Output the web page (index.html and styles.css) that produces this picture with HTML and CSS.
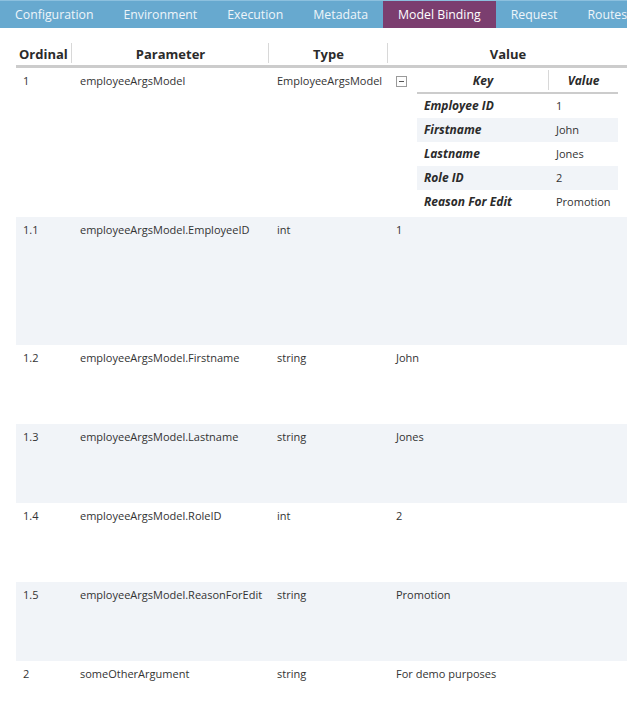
FILE: index.html
```html
<!DOCTYPE html>
<html>
<head>
<meta charset="utf-8">
<link rel="stylesheet" href="styles.css">
</head>
<body>
<nav class="tabs">
  <span class="tab">Configuration</span><span class="tab">Environment</span><span class="tab">Execution</span><span class="tab">Metadata</span><span class="tab active">Model Binding</span><span class="tab">Request</span><span class="tab">Routes</span>
</nav>
<main class="content">
  <table class="grid">
    <colgroup>
      <col class="c-ord"><col class="c-param"><col class="c-type"><col class="c-val">
    </colgroup>
    <thead>
      <tr><th>Ordinal</th><th>Parameter</th><th>Type</th><th class="last">Value</th></tr>
    </thead>
    <tbody>
      <tr class="r-first">
        <td>1</td><td>employeeArgsModel</td><td>EmployeeArgsModel</td>
        <td class="nested-cell">
          <div class="nested-wrap">
            <span class="toggle"><span class="minus"></span></span>
            <table class="kv">
              <colgroup><col class="k-key"><col class="k-val"></colgroup>
              <thead><tr><th>Key</th><th class="last">Value</th></tr></thead>
              <tbody>
                <tr><td class="key">Employee ID</td><td>1</td></tr>
                <tr class="alt"><td class="key">Firstname</td><td>John</td></tr>
                <tr><td class="key">Lastname</td><td>Jones</td></tr>
                <tr class="alt"><td class="key">Role ID</td><td>2</td></tr>
                <tr><td class="key">Reason For Edit</td><td>Promotion</td></tr>
              </tbody>
            </table>
          </div>
        </td>
      </tr>
      <tr class="alt r-tall"><td>1.1</td><td>employeeArgsModel.EmployeeID</td><td>int</td><td>1</td></tr>
      <tr class="r-std"><td>1.2</td><td>employeeArgsModel.Firstname</td><td>string</td><td>John</td></tr>
      <tr class="alt r-std"><td>1.3</td><td>employeeArgsModel.Lastname</td><td>string</td><td>Jones</td></tr>
      <tr class="r-std"><td>1.4</td><td>employeeArgsModel.RoleID</td><td>int</td><td>2</td></tr>
      <tr class="alt r-std"><td>1.5</td><td>employeeArgsModel.ReasonForEdit</td><td>string</td><td>Promotion</td></tr>
      <tr class="r-std"><td>2</td><td>someOtherArgument</td><td>string</td><td>For demo purposes</td></tr>
    </tbody>
  </table>
</main>
</body>
</html>
```
FILE: styles.css
```css
html, body {
  margin: 0;
  padding: 0;
  background: #ffffff;
  overflow: hidden;
  font-family: "Open Sans", "Noto Sans", sans-serif;
  color: #333333;
}
.tabs {
  display: flex;
  white-space: nowrap;
  background: #67a9cf;
  border-top: 1px solid #8cc0de;
  height: 27px;
  overflow: hidden;
}
.tab {
  flex: none;
  padding: 0 15px;
  line-height: 27px;
  font-size: 12.3px;
  color: #eef5fa;
}
.tab.active {
  background: #7b3e6f;
  color: #ffffff;
}
.content {
  padding: 14px 0 0 16px;
}
.grid {
  width: 612px;
  table-layout: fixed;
  border-collapse: collapse;
  font-size: 11px;
}
.c-ord { width: 56px; }
.c-param { width: 197px; }
.c-type { width: 119px; }
.c-val { width: 240px; }
.grid > thead th {
  height: 23px;
  padding: 0;
  font-size: 13px;
  font-weight: 700;
  color: #2b2b2b;
  text-align: center;
  border-bottom: 3px solid #cccccc;
  background-image: linear-gradient(#d8d8d8, #d8d8d8);
  background-size: 1px 20px;
  background-position: right 1px;
  background-repeat: no-repeat;
}
.grid > thead th:first-child { text-align: left; padding-left: 3px; }
.grid > thead th.last { background-image: none; }
.grid > tbody > tr > td {
  vertical-align: top;
  padding: 5px 8px 0 8px;
  line-height: 16px;
  white-space: nowrap;
  overflow: hidden;
}
.grid > tbody > tr > td:first-child { padding-left: 7px; }
.grid > tbody > tr.alt { background: #f1f4f8; }
.r-first { height: 150px; }
.r-tall { height: 128px; }
.r-std { height: 79px; }
.grid > tbody > tr > td.nested-cell { padding: 1px 0 0 8px; }
.nested-wrap {
  display: flex;
  align-items: flex-start;
  gap: 10px;
}
.toggle {
  flex: none;
  margin-top: 7px;
  width: 9px;
  height: 9px;
  border: 1px solid #9a9a9a;
  background: #fdfdfd;
  display: flex;
  align-items: center;
  justify-content: center;
}
.minus {
  width: 5px;
  height: 1px;
  background: #555555;
}
.kv {
  width: 201px;
  table-layout: fixed;
  border-collapse: collapse;
  font-size: 11px;
}
.k-key { width: 132px; }
.k-val { width: 69px; }
.kv th {
  height: 23px;
  padding: 0;
  font-size: 12px;
  font-style: italic;
  font-weight: 700;
  color: #2b2b2b;
  text-align: center;
  border-bottom: 2px solid #cccccc;
  background-image: linear-gradient(#d8d8d8, #d8d8d8);
  background-size: 1px 20px;
  background-position: right 1px;
  background-repeat: no-repeat;
}
.kv th.last { background-image: none; }
.kv td {
  height: 24px;
  padding: 0 0 0 7px;
  line-height: 16px;
  white-space: nowrap;
  vertical-align: middle;
}
.kv td.key {
  font-weight: 700;
  font-style: italic;
  font-size: 12px;
  color: #2b2b2b;
}
.kv tr.alt { background: #f1f4f8; }
```
